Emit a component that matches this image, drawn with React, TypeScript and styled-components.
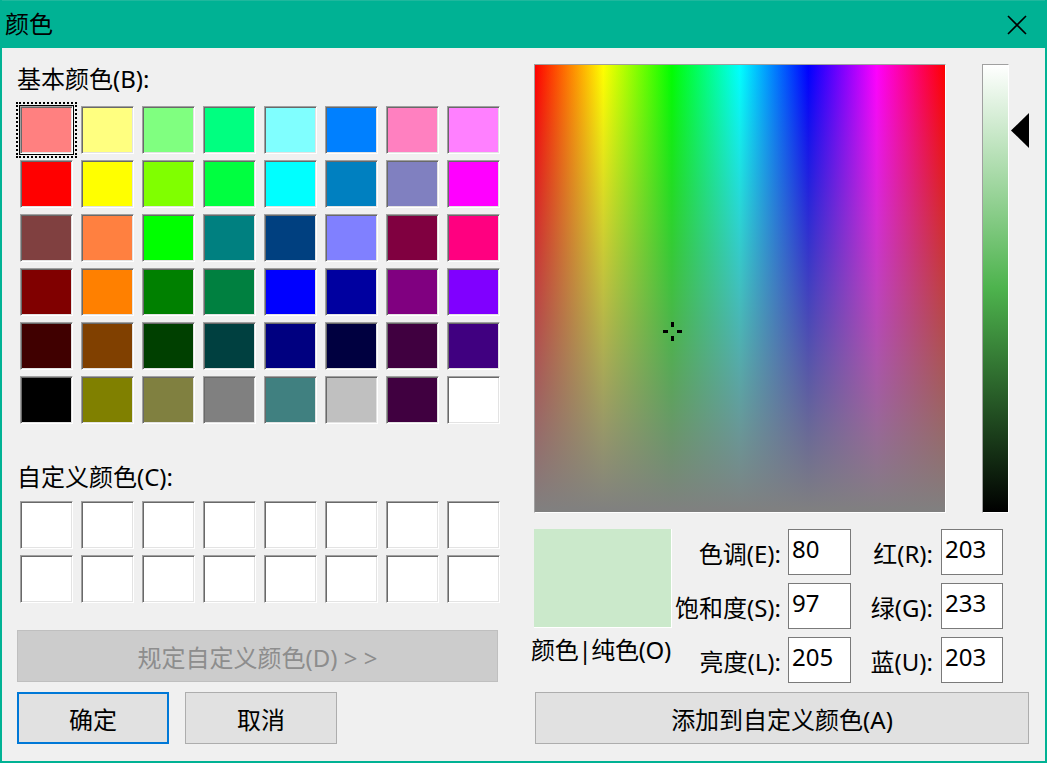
import React from 'react';
import styled, { createGlobalStyle } from 'styled-components';

const GlobalStyle = createGlobalStyle`
  html, body {
    margin: 0;
    padding: 0;
    background: #f0f0f0;
  }
  * {
    box-sizing: border-box;
  }
`;

const FONT = `"Noto Sans", "Noto Sans CJK SC", sans-serif`;

const BASIC_COLORS = [
  '#FF8080', '#FFFF80', '#80FF80', '#00FF80', '#80FFFF', '#0080FF', '#FF80C0', '#FF80FF',
  '#FF0000', '#FFFF00', '#80FF00', '#00FF40', '#00FFFF', '#0080C0', '#8080C0', '#FF00FF',
  '#804040', '#FF8040', '#00FF00', '#008080', '#004080', '#8080FF', '#800040', '#FF0080',
  '#800000', '#FF8000', '#008000', '#008040', '#0000FF', '#0000A0', '#800080', '#8000FF',
  '#400000', '#804000', '#004000', '#004040', '#000080', '#000040', '#400040', '#400080',
  '#000000', '#808000', '#808040', '#808080', '#408080', '#C0C0C0', '#400040', '#FFFFFF',
];

const FIELDS = [
  { label: '色调(E):', value: '80', label2: '红(R):', value2: '203' },
  { label: '饱和度(S):', value: '97', label2: '绿(G):', value2: '233' },
  { label: '亮度(L):', value: '205', label2: '蓝(U):', value2: '203' },
];

const App: React.FC = () => {
  return (
    <>
      <GlobalStyle />
      <Window>
        <TitleBar>
          <Title>颜色</Title>
          <CloseButton aria-label="关闭">
            <svg width="20" height="20" viewBox="0 0 20 20">
              <path d="M1 1 L19 19 M19 1 L1 19" stroke="#000" strokeWidth="1.6" />
            </svg>
          </CloseButton>
        </TitleBar>

        <Body>
          <LeftColumn>
            <SectionLabel>基本颜色(B):</SectionLabel>
            <SwatchGrid>
              {BASIC_COLORS.map((c, i) => (
                <Swatch key={i} $color={c} $selected={i === 0} />
              ))}
            </SwatchGrid>

            <SectionLabel $top={38}>自定义颜色(C):</SectionLabel>
            <SwatchGrid $top={9}>
              {Array.from({ length: 16 }).map((_, i) => (
                <Swatch key={i} $color="#FFFFFF" />
              ))}
            </SwatchGrid>

            <DefineButton disabled>规定自定义颜色(D) &gt; &gt;</DefineButton>

            <ButtonRow>
              <DialogButton $primary>确定</DialogButton>
              <DialogButton>取消</DialogButton>
            </ButtonRow>
          </LeftColumn>

          <RightColumn>
            <SpectrumRow>
              <Spectrum>
                <Crosshair width="20" height="20" viewBox="0 0 20 20">
                  <rect x="9" y="1" width="3" height="5" fill="#000" />
                  <rect x="9" y="15" width="3" height="5" fill="#000" />
                  <rect x="1" y="9" width="5" height="3" fill="#000" />
                  <rect x="15" y="9" width="5" height="3" fill="#000" />
                </Crosshair>
              </Spectrum>
              <LumBar />
              <LumArrow width="18" height="35" viewBox="0 0 18 35">
                <polygon points="0,17.5 18,0 18,35" fill="#000" />
              </LumArrow>
            </SpectrumRow>

            <ValuesRow>
              <PreviewBox>
                <Preview $color="rgb(203,233,203)" />
                <PreviewLabel>颜色|纯色(O)</PreviewLabel>
              </PreviewBox>
              <FieldGrid>
                {FIELDS.map((f) => (
                  <React.Fragment key={f.label}>
                    <FieldLabel $pad={7}>{f.label}</FieldLabel>
                    <FieldInput readOnly value={f.value} />
                    <FieldLabel $pad={8}>{f.label2}</FieldLabel>
                    <FieldInput readOnly value={f.value2} />
                  </React.Fragment>
                ))}
              </FieldGrid>
            </ValuesRow>

            <AddButton>添加到自定义颜色(A)</AddButton>
          </RightColumn>
        </Body>
      </Window>
    </>
  );
};

// Styled Components
const Window = styled.div`
  width: 1047px;
  height: 763px;
  border: 2px solid #00b294;
  border-top: none;
  background: #f0f0f0;
  display: flex;
  flex-direction: column;
  font-family: ${FONT};
  color: #000;
  overflow: hidden;
`;

const TitleBar = styled.div`
  height: 48px;
  flex-shrink: 0;
  background: #00b294;
  border-top: 1px solid #1fb89d;
  display: flex;
  align-items: center;
  justify-content: space-between;
  padding: 0 0 0 3px;
`;

const Title = styled.span`
  font-size: 24px;
  line-height: 30px;
  margin-top: -2px;
`;

const CloseButton = styled.div`
  width: 62px;
  height: 46px;
  display: flex;
  align-items: center;
  justify-content: center;
  margin-right: -3px;
`;

const Body = styled.div`
  flex: 1;
  display: flex;
  gap: 34px;
  padding: 16px 0 0 15px;
`;

const LeftColumn = styled.div`
  width: 483px;
  display: flex;
  flex-direction: column;
`;

const SectionLabel = styled.div<{ $top?: number }>`
  font-size: 24px;
  line-height: 30px;
  margin-top: ${(p) => p.$top ?? 0}px;
  white-space: nowrap;
`;

const SwatchGrid = styled.div<{ $top?: number }>`
  display: grid;
  grid-template-columns: repeat(8, 53px);
  grid-auto-rows: 48px;
  column-gap: 8px;
  row-gap: 6px;
  margin-top: ${(p) => p.$top ?? 12}px;
  margin-left: 3px;
`;

const Swatch = styled.div<{ $color: string; $selected?: boolean }>`
  background: ${(p) => p.$color};
  border: 1px solid;
  border-color: #a0a0a0 #ffffff #ffffff #a0a0a0;
  box-shadow: inset 1px 1px 0 #696969, inset -1px -1px 0 #e3e3e3
    ${(p) => (p.$selected ? ', 0 0 0 1px #000' : '')};
  outline: ${(p) => (p.$selected ? '2px dotted #000' : 'none')};
  outline-offset: 2px;
`;

const DefineButton = styled.button`
  margin-top: 27px;
  width: 481px;
  height: 52px;
  background: #cccccc;
  border: 1px solid #bfbfbf;
  color: #8d8d8d;
  font-family: ${FONT};
  font-size: 24px;
  padding: 0;
`;

const ButtonRow = styled.div`
  display: flex;
  gap: 16px;
  margin-top: 10px;
`;

const DialogButton = styled.button<{ $primary?: boolean }>`
  width: 152px;
  height: 52px;
  background: #e1e1e1;
  border: ${(p) => (p.$primary ? '2px solid #0078d7' : '1px solid #adadad')};
  color: #000;
  font-family: ${FONT};
  font-size: 24px;
  padding: 0;
`;

const RightColumn = styled.div`
  width: 495px;
  display: flex;
  flex-direction: column;
`;

const SpectrumRow = styled.div`
  display: flex;
  align-items: flex-start;
`;

const Spectrum = styled.div`
  position: relative;
  width: 412px;
  height: 449px;
  border: 1px solid;
  border-color: #a0a0a0 #ffffff #ffffff #a0a0a0;
  background:
    linear-gradient(to bottom, rgba(128, 128, 128, 0), rgba(128, 128, 128, 1)),
    linear-gradient(
      to right,
      #ff0000 0%,
      #ffff00 16.67%,
      #00ff00 33.33%,
      #00ffff 50%,
      #0000ff 66.67%,
      #ff00ff 83.33%,
      #ff0000 100%
    );
`;

const Crosshair = styled.svg`
  position: absolute;
  left: 127px;
  top: 256px;
`;

const LumBar = styled.div`
  width: 27px;
  height: 449px;
  margin-left: 36px;
  border: 1px solid;
  border-color: #a0a0a0 #ffffff #ffffff #a0a0a0;
  background: linear-gradient(
    to bottom,
    #ffffff 0%,
    rgb(77, 179, 77) 50%,
    #000000 100%
  );
`;

const LumArrow = styled.svg`
  margin-left: 2px;
  margin-top: 49px;
`;

const ValuesRow = styled.div`
  display: flex;
  margin-top: 16px;
`;

const PreviewBox = styled.div`
  width: 138px;
  display: flex;
  flex-direction: column;
`;

const Preview = styled.div<{ $color: string }>`
  width: 138px;
  height: 99px;
  background: ${(p) => p.$color};
  border-right: 1px solid #fff;
  border-bottom: 1px solid #fff;
`;

const PreviewLabel = styled.div`
  font-size: 24px;
  line-height: 30px;
  margin-top: 7px;
  margin-left: -3px;
  letter-spacing: -0.3px;
  white-space: nowrap;
`;

const FieldGrid = styled.div`
  display: grid;
  grid-template-columns: 116px 63px 90px 62px;
  grid-auto-rows: 46px;
  row-gap: 8px;
`;

const FieldLabel = styled.div<{ $pad: number }>`
  font-size: 24px;
  display: flex;
  align-items: center;
  justify-content: flex-end;
  padding-right: ${(p) => p.$pad}px;
  white-space: nowrap;
`;

const FieldInput = styled.input`
  width: 100%;
  height: 46px;
  border: 1px solid #7a7a7a;
  background: #fff;
  font-family: ${FONT};
  font-size: 24px;
  color: #000;
  padding: 0 0 8px 3px;
  outline: none;
`;

const AddButton = styled.button`
  margin-top: 9px;
  margin-left: 1px;
  width: 494px;
  height: 52px;
  background: #e1e1e1;
  border: 1px solid #adadad;
  color: #000;
  font-family: ${FONT};
  font-size: 24px;
  padding: 0;
`;

export default App;
